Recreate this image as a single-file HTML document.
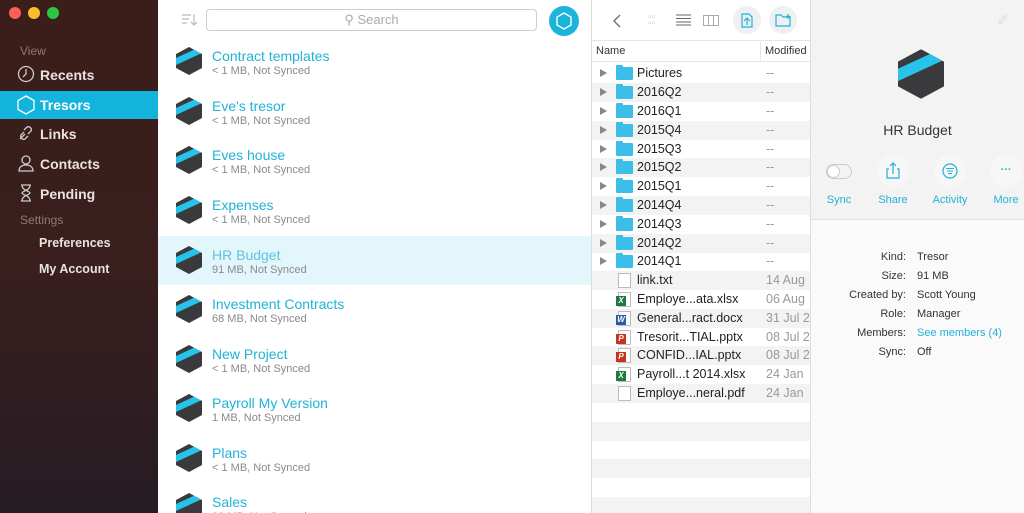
<!DOCTYPE html>
<html><head><meta charset="utf-8"><style>
*{margin:0;padding:0;box-sizing:border-box}
html,body{width:1024px;height:513px;overflow:hidden}
body{font-family:"Liberation Sans",sans-serif;position:relative;background:#fff}
.side{position:absolute;left:0;top:0;width:158px;height:513px;background:linear-gradient(180deg,#3b1d19 0%,#3a1f1e 50%,#261c24 100%);color:#e8e2e0}
.dot{position:absolute;top:7px;width:12px;height:12px;border-radius:50%}
.side .h{position:absolute;left:20px;font-size:12px;color:#8c7b78}
.side .it{position:absolute;left:0;width:158px;height:28px;font-size:14px;font-weight:bold;padding-left:40px;line-height:28px}
.side .it svg{position:absolute;left:17px;top:4px}
.side .sub{position:absolute;left:39px;font-size:12.5px;font-weight:bold}
.list{position:absolute;left:158px;top:0;width:433px;height:513px;background:#fff;overflow:hidden}
.row{position:absolute;left:0;width:433px;height:49px}
.row svg{position:absolute;left:18px;top:10px}
.row .t{position:absolute;left:54px;top:11px;font-size:14px;color:#1fb3d8}
.row .s{position:absolute;left:54px;top:28px;font-size:11px;color:#8a8a8a}
.files{position:absolute;left:591px;top:0;width:220px;height:513px;background:#fff;border-left:1px solid #ddd;border-right:1px solid #ddd;overflow:hidden}
.fr{position:absolute;left:0;width:219px;height:19px;font-size:12.5px;color:#222;line-height:19px;overflow:hidden;white-space:nowrap}
.fr.z{background:#f3f3f3}
.fr .n{position:absolute;left:45px}
.fr .m{position:absolute;left:174px;color:#999}
.tri{position:absolute;left:8px;top:5px;width:0;height:0;border-left:7px solid #888;border-top:4px solid transparent;border-bottom:4px solid transparent}
.fold{position:absolute;left:24px;top:3px;width:17px;height:13px;background:#3bbfe8;border-radius:1px}
.fold:before{content:"";position:absolute;left:0;top:-2px;width:7px;height:3px;background:#3bbfe8;border-radius:1px 1px 0 0}
.fi{position:absolute;left:26px;top:2px;width:13px;height:15px;border:1px solid #bbb;background:#fff}
.fi b{position:absolute;left:-3px;top:3px;width:10px;height:10px;color:#fff;font-size:8px;line-height:10px;text-align:center}
.right{position:absolute;left:811px;top:0;width:213px;height:513px;background:#fafafa}
.kv{position:absolute;font-size:11px;color:#333}
.kv .k{position:absolute;right:0;width:100px;text-align:right}
.act{position:absolute;top:155px;width:40px;text-align:center;font-size:11px;color:#1fb3d8}
.act .c{width:32px;height:32px;border-radius:50%;background:#f7f7f7;margin:0 auto 7px}
</style></head><body>
<svg width="0" height="0" style="position:absolute"><defs>
<symbol id="hx" viewBox="0 0 26 28"><clipPath id="cp"><polygon points="13,0 26,7 26,21 13,28 0,21 0,7"/></clipPath><g clip-path="url(#cp)"><rect width="26" height="28" fill="#3a3a3c"/><polygon points="0,11 26,-1 26,6 0,18" fill="#27c3ea"/></g></symbol>
</defs></svg>
<div class="side">
<div class="dot" style="left:9px;background:#fc5f57"></div><div class="dot" style="left:28px;background:#fdbc2e"></div><div class="dot" style="left:47px;background:#2ac840"></div>
<div class="h" style="top:44px">View</div>
<div class="it" style="top:61px"><svg width="18" height="18"><circle cx="9" cy="9" r="7.5" fill="none" stroke="#ccc" stroke-width="1.3"/><path d="M9 4v5l-3 3" fill="none" stroke="#ccc" stroke-width="1.3"/></svg>Recents</div>
<div class="it" style="top:91px;background:#12b4dc;color:#fff"><svg width="18" height="20"><polygon points="9,1 17,5.5 17,14.5 9,19 1,14.5 1,5.5" fill="none" stroke="#fff" stroke-width="1.3"/></svg>Tresors</div>
<div class="it" style="top:120px"><svg width="18" height="18"><path d="M3 15l5-5M7 6l3-3a3 3 0 0 1 4 4l-3 3M11 12l-3 3a3 3 0 0 1-4-4l3-3" fill="none" stroke="#ccc" stroke-width="1.3"/></svg>Links</div>
<div class="it" style="top:150px"><svg width="18" height="18"><circle cx="9" cy="6" r="4" fill="none" stroke="#ccc" stroke-width="1.3"/><path d="M2 17c0-4 3-6 7-6s7 2 7 6z" fill="none" stroke="#ccc" stroke-width="1.3"/></svg>Contacts</div>
<div class="it" style="top:180px"><svg width="18" height="18"><path d="M4 1h10M4 17h10M5 1c0 6 8 6 8 8s-8 2-8 8M13 1c0 6-8 6-8 8s8 2 8 8" fill="none" stroke="#ccc" stroke-width="1.3"/></svg>Pending</div>
<div class="h" style="top:213px">Settings</div>
<div class="sub" style="top:236px">Preferences</div>
<div class="sub" style="top:262px">My Account</div>
</div>
<div class="list">
<svg style="position:absolute;left:23px;top:13px" width="16" height="14"><path d="M1 2h9M1 6h7M1 10h5M13 1v11M10 9l3 3 3-3" fill="none" stroke="#bbb" stroke-width="1.2"/></svg>
<div style="position:absolute;left:48px;top:9px;width:331px;height:22px;border:1px solid #ccc;border-radius:4px;background:#fff;text-align:center;font-size:13px;color:#aaa;line-height:20px">&#9906; Search</div>
<div style="position:absolute;left:391px;top:6px;width:30px;height:30px;border-radius:50%;background:#1bb4dc"><svg width="30" height="30"><polygon points="15,7 22,11 22,19 15,23 8,19 8,11" fill="none" stroke="#fff" stroke-width="1.4"/></svg></div>
<div class="row" style="top:37px"><svg width="26" height="28"><use href="#hx"/></svg><div class="t">Contract templates</div><div class="s">&lt; 1 MB, Not Synced</div></div>
<div class="row" style="top:87px"><svg width="26" height="28"><use href="#hx"/></svg><div class="t">Eve's tresor</div><div class="s">&lt; 1 MB, Not Synced</div></div>
<div class="row" style="top:136px"><svg width="26" height="28"><use href="#hx"/></svg><div class="t">Eves house</div><div class="s">&lt; 1 MB, Not Synced</div></div>
<div class="row" style="top:186px"><svg width="26" height="28"><use href="#hx"/></svg><div class="t">Expenses</div><div class="s">&lt; 1 MB, Not Synced</div></div>
<div class="row" style="top:236px;background:#e3f6fc"><svg width="26" height="28"><use href="#hx"/></svg><div class="t" style="color:#5ec3df">HR Budget</div><div class="s">91 MB, Not Synced</div></div>
<div class="row" style="top:285px"><svg width="26" height="28"><use href="#hx"/></svg><div class="t">Investment Contracts</div><div class="s">68 MB, Not Synced</div></div>
<div class="row" style="top:335px"><svg width="26" height="28"><use href="#hx"/></svg><div class="t">New Project</div><div class="s">&lt; 1 MB, Not Synced</div></div>
<div class="row" style="top:384px"><svg width="26" height="28"><use href="#hx"/></svg><div class="t">Payroll My Version</div><div class="s">1 MB, Not Synced</div></div>
<div class="row" style="top:434px"><svg width="26" height="28"><use href="#hx"/></svg><div class="t">Plans</div><div class="s">&lt; 1 MB, Not Synced</div></div>
<div class="row" style="top:483px"><svg width="26" height="28"><use href="#hx"/></svg><div class="t">Sales</div><div class="s">20 MB, Not Synced</div></div>
</div>
<div class="files">
<div style="position:absolute;left:0;top:0;width:219px;height:41px;background:#fff;border-bottom:1px solid #e5e5e5"></div>
<svg style="position:absolute;left:20px;top:13px" width="10" height="16"><path d="M8 2L2 8l6 6" fill="none" stroke="#777" stroke-width="1.5"/></svg>
<div style="position:absolute;left:56px;top:15px;font-size:10px;color:#ccc;line-height:6px">▫▫<br>▫▫</div>
<svg style="position:absolute;left:84px;top:14px" width="16" height="12"><path d="M0 1h15M0 4.5h15M0 8h15M0 11h15" stroke="#666"/></svg>
<svg style="position:absolute;left:111px;top:15px" width="16" height="11"><rect x=".5" y=".5" width="15" height="10" fill="none" stroke="#aaa"/><path d="M5.5 0v11M10.5 0v11" stroke="#aaa"/></svg>
<div style="position:absolute;left:141px;top:6px;width:28px;height:28px;border-radius:50%;background:#eef0f1"><svg width="28" height="28"><path d="M9 8h7l3 3v10H9z M14 19v-7M11 15l3-3 3 3" fill="none" stroke="#1fb3d8" stroke-width="1.2"/></svg></div>
<div style="position:absolute;left:177px;top:6px;width:28px;height:28px;border-radius:50%;background:#eef0f1"><svg width="28" height="28"><path d="M7 9h5l2 2h7v9H7z M19 8v5M16.5 10.5h5" fill="none" stroke="#1fb3d8" stroke-width="1.2"/></svg></div>
<div style="position:absolute;left:0;top:42px;width:219px;height:20px;border-bottom:1px solid #e5e5e5;font-size:11px;color:#333;line-height:19px"><span style="position:absolute;left:4px">Name</span><span style="position:absolute;left:168px;border-left:1px solid #e5e5e5;padding-left:4px">Modified</span></div>
<div class="fr" style="top:64px"><i class="tri"></i><i class="fold"></i><span class="n">Pictures</span><span class="m">--</span></div>
<div class="fr z" style="top:83px"><i class="tri"></i><i class="fold"></i><span class="n">2016Q2</span><span class="m">--</span></div>
<div class="fr" style="top:102px"><i class="tri"></i><i class="fold"></i><span class="n">2016Q1</span><span class="m">--</span></div>
<div class="fr z" style="top:121px"><i class="tri"></i><i class="fold"></i><span class="n">2015Q4</span><span class="m">--</span></div>
<div class="fr" style="top:140px"><i class="tri"></i><i class="fold"></i><span class="n">2015Q3</span><span class="m">--</span></div>
<div class="fr z" style="top:158px"><i class="tri"></i><i class="fold"></i><span class="n">2015Q2</span><span class="m">--</span></div>
<div class="fr" style="top:177px"><i class="tri"></i><i class="fold"></i><span class="n">2015Q1</span><span class="m">--</span></div>
<div class="fr z" style="top:196px"><i class="tri"></i><i class="fold"></i><span class="n">2014Q4</span><span class="m">--</span></div>
<div class="fr" style="top:215px"><i class="tri"></i><i class="fold"></i><span class="n">2014Q3</span><span class="m">--</span></div>
<div class="fr z" style="top:234px"><i class="tri"></i><i class="fold"></i><span class="n">2014Q2</span><span class="m">--</span></div>
<div class="fr" style="top:252px"><i class="tri"></i><i class="fold"></i><span class="n">2014Q1</span><span class="m">--</span></div>
<div class="fr z" style="top:271px"><i class="fi"></i><span class="n">link.txt</span><span class="m">14 Aug</span></div>
<div class="fr" style="top:290px"><i class="fi"><b style="background:#1e7a3e">X</b></i><span class="n">Employe...ata.xlsx</span><span class="m">06 Aug</span></div>
<div class="fr z" style="top:309px"><i class="fi"><b style="background:#2a5aa8">W</b></i><span class="n">General...ract.docx</span><span class="m">31 Jul 2</span></div>
<div class="fr" style="top:328px"><i class="fi"><b style="background:#c8351e">P</b></i><span class="n">Tresorit...TIAL.pptx</span><span class="m">08 Jul 2</span></div>
<div class="fr z" style="top:346px"><i class="fi"><b style="background:#c8351e">P</b></i><span class="n">CONFID...IAL.pptx</span><span class="m">08 Jul 2</span></div>
<div class="fr" style="top:365px"><i class="fi"><b style="background:#1e7a3e">X</b></i><span class="n">Payroll...t 2014.xlsx</span><span class="m">24 Jan</span></div>
<div class="fr z" style="top:384px"><i class="fi"></i><span class="n">Employe...neral.pdf</span><span class="m">24 Jan</span></div>
<div class="fr z" style="top:422px"></div><div class="fr z" style="top:459px"></div><div class="fr z" style="top:497px"></div>
</div>
<div class="right">
<div style="position:absolute;left:0;top:0;width:213px;height:220px;background:#f3f3f3;border-bottom:1px solid #e3e3e3"></div>
<div style="position:absolute;left:186px;top:12px;color:#ddd;font-size:14px">✐</div>
<svg style="position:absolute;left:87px;top:48px" width="46" height="52" viewBox="0 0 26 28"><use href="#hx"/></svg>
<div style="position:absolute;left:0;width:213px;top:122px;text-align:center;font-size:14px;color:#333">HR Budget</div>
<div class="act" style="left:8px"><div class="c" style="background:none;padding-top:9px"><div style="width:26px;height:15px;border:1px solid #ccc;border-radius:8px;margin:0 auto;position:relative"><div style="position:absolute;left:0;top:0;width:13px;height:13px;border-radius:50%;border:1px solid #ccc;background:#fff"></div></div></div>Sync</div>
<div class="act" style="left:62px"><div class="c"><svg width="32" height="32"><path d="M12 14h-2v9h12v-9h-2M16 19V8M13 11l3-3 3 3" fill="none" stroke="#1fb3d8" stroke-width="1.2"/></svg></div>Share</div>
<div class="act" style="left:119px"><div class="c"><svg width="32" height="32"><circle cx="16" cy="16" r="7" fill="none" stroke="#1fb3d8" stroke-width="1.2"/><path d="M12 13.5h8M13 16h6M14 18.5h4" stroke="#1fb3d8"/></svg></div>Activity</div>
<div class="act" style="left:175px"><div class="c" style="line-height:30px;font-weight:bold">···</div>More</div>
<div class="kv" style="left:0;top:248px;width:213px;line-height:19px">
<div style="position:relative;height:19px"><span class="k" style="right:118px">Kind:</span><span style="position:absolute;left:106px">Tresor</span></div>
<div style="position:relative;height:19px"><span class="k" style="right:118px">Size:</span><span style="position:absolute;left:106px">91 MB</span></div>
<div style="position:relative;height:19px"><span class="k" style="right:118px">Created by:</span><span style="position:absolute;left:106px">Scott Young</span></div>
<div style="position:relative;height:19px"><span class="k" style="right:118px">Role:</span><span style="position:absolute;left:106px">Manager</span></div>
<div style="position:relative;height:19px"><span class="k" style="right:118px">Members:</span><span style="position:absolute;left:106px;color:#1fb3d8">See members (4)</span></div>
<div style="position:relative;height:19px"><span class="k" style="right:118px">Sync:</span><span style="position:absolute;left:106px">Off</span></div>
</div>
</div>
</body></html>
